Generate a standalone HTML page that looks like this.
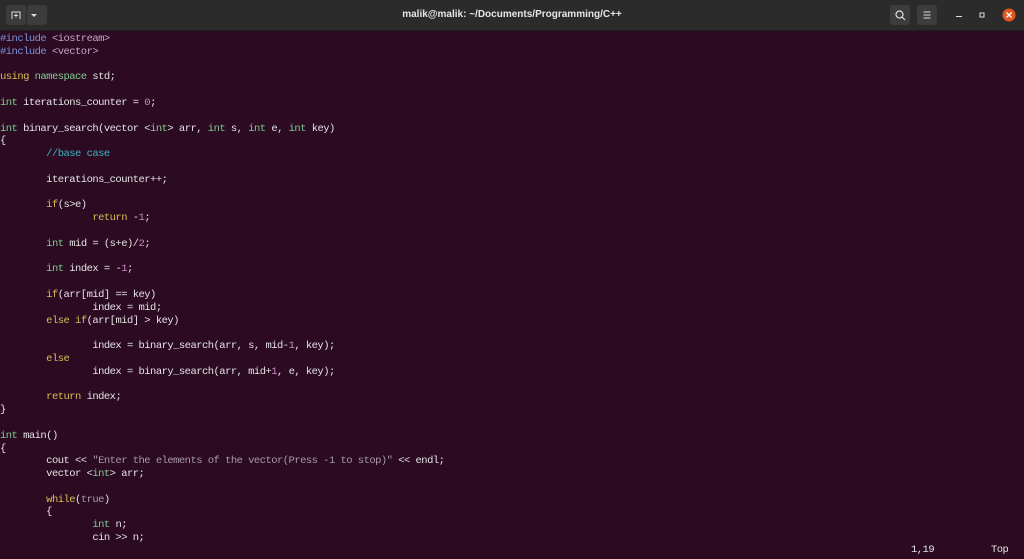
<!DOCTYPE html>
<html><head><meta charset="utf-8"><style>
html,body{margin:0;padding:0;width:1024px;height:559px;overflow:hidden;background:#2c0a22;}
.tb{position:absolute;left:0;top:0;width:1024px;height:30px;background:#2b2b2b;border-bottom:1px solid #1e1e1e;}
.title{position:absolute;left:0;width:1024px;top:0;text-align:center;color:#e6e6e6;font:bold 10px "Liberation Sans",sans-serif;line-height:30px;}
.btn{position:absolute;top:5px;width:20px;height:20px;background:#3c3c3c;border-radius:3px;}
pre{position:absolute;left:0;top:33px;margin:0;font:10.5px "Liberation Mono",monospace;line-height:12.8px;letter-spacing:-0.53px;color:#e4e4e4;tab-size:8;}
.p{color:#7d93d6}.s{color:#c9a3c6}.k{color:#d7bd55}.t{color:#7fcf8f}.n{color:#c98bbd}.c{color:#36b7c9}.q{color:#a99aaa}
.st{position:absolute;top:544px;font:10.5px "Liberation Mono",monospace;letter-spacing:-0.53px;color:#e4e4e4;}
</style></head><body>
<div class="tb">
<div class="btn" style="left:6px"><svg width="20" height="20"><path d="M6 14V7h8v7M10 8.5v4M8 10.5h4" stroke="#ddd" stroke-width="1" fill="none"/></svg></div>
<div class="btn" style="left:27px"><svg width="14" height="20"><path d="M4 9h6l-3 3z" fill="#ddd"/></svg></div>
<div class="title">malik@malik: ~/Documents/Programming/C++</div>
<div class="btn" style="left:890px"><svg width="20" height="20"><circle cx="9.5" cy="9.5" r="3.5" stroke="#ddd" fill="none" stroke-width="1.2"/><path d="M12 12l3 3" stroke="#ddd" stroke-width="1.2"/></svg></div>
<div class="btn" style="left:917px"><svg width="20" height="20"><path d="M6.5 7h7M6.5 10h7M6.5 13h7" stroke="#ddd" stroke-width="1.1"/></svg></div>
<svg style="position:absolute;left:950px;top:5px" width="74" height="20"><path d="M6 11.5h6" stroke="#ddd" stroke-width="1"/><rect x="30" y="8" width="4" height="4" stroke="#ddd" fill="none" stroke-width="1"/><circle cx="59" cy="10" r="6.5" fill="#e0561f"/><path d="M56.5 7.5l5 5M61.5 7.5l-5 5" stroke="#fff" stroke-width="1.3"/></svg>
</div>
<pre><span class="p">#include</span> <span class="s">&lt;iostream&gt;</span>
<span class="p">#include</span> <span class="s">&lt;vector&gt;</span>

<span class="k">using</span> <span class="t">namespace</span> std;

<span class="t">int</span> iterations_counter = <span class="n">0</span>;

<span class="t">int</span> binary_search(vector &lt;<span class="t">int</span>&gt; arr, <span class="t">int</span> s, <span class="t">int</span> e, <span class="t">int</span> key)
{
	<span class="c">//base case</span>

	iterations_counter++;

	<span class="k">if</span>(s&gt;e)
		<span class="k">return</span> -<span class="n">1</span>;

	<span class="t">int</span> mid = (s+e)/<span class="n">2</span>;

	<span class="t">int</span> index = -<span class="n">1</span>;

	<span class="k">if</span>(arr[mid] == key)
		index = mid;
	<span class="k">else</span> <span class="k">if</span>(arr[mid] &gt; key)

		index = binary_search(arr, s, mid-<span class="n">1</span>, key);
	<span class="k">else</span>
		index = binary_search(arr, mid+<span class="n">1</span>, e, key);

	<span class="k">return</span> index;
}

<span class="t">int</span> main()
{
	cout &lt;&lt; <span class="q">"Enter the elements of the vector(Press -1 to stop)"</span> &lt;&lt; endl;
	vector &lt;<span class="t">int</span>&gt; arr;

	<span class="k">while</span>(<span class="q">true</span>)
	{
		<span class="t">int</span> n;
		cin &gt;&gt; n;</pre>
<div class="st" style="left:911px">1,19</div>
<div class="st" style="left:991px">Top</div>
</body></html>
